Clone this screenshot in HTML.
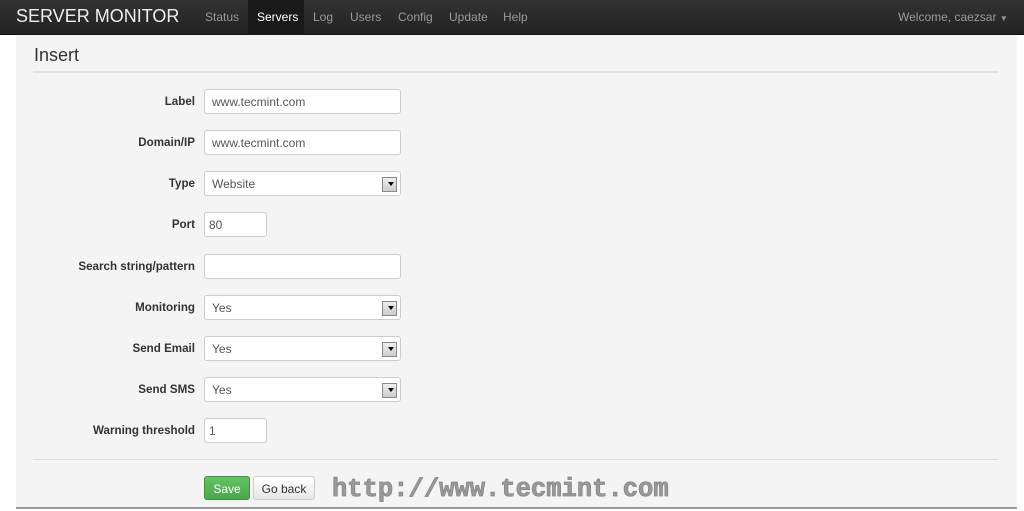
<!DOCTYPE html>
<html><head><style>
*{box-sizing:border-box;margin:0;padding:0}
body{width:1024px;height:511px;overflow:hidden;background:#fff;font-family:"Liberation Sans",Arial,sans-serif;position:relative}
.nav{position:absolute;left:0;top:0;width:1024px;height:35px;background:linear-gradient(#333,#222);border-bottom:1px solid #111}
.brand{position:absolute;left:16px;top:6px;color:#eee;font-size:18px}
.nav a{position:absolute;top:10px;color:#999;font-size:12px}
.act{position:absolute;left:248px;top:0;width:56px;height:35px;background:#1a1a1a}
.panel{position:absolute;left:16px;top:35px;width:1001px;height:474px;background:#f4f4f4;border-bottom:2px solid #999}
h1{position:absolute;left:34px;top:45px;font-size:18px;font-weight:normal;color:#333}
.hr{position:absolute;left:33px;width:965px;height:2px;background:#e2e2e2}
.lbl{position:absolute;right:829px;font-size:11.6px;font-weight:bold;color:#333}
.in{position:absolute;left:204px;width:197px;height:25px;background:#fff;border:1px solid #ccc;border-radius:3px;font-size:12px;color:#555;padding:5px 0 0 7px}
.sm{width:63px;padding-left:4px}
.sel::after{content:"";position:absolute;right:3px;top:5px;width:13px;height:13px;background:linear-gradient(#eee,#ccc);border:1px solid #888}
.sel::before{content:"";position:absolute;right:6px;top:10px;border:3.5px solid transparent;border-top:4px solid #000;z-index:2}
.btn{position:absolute;top:476px;height:24px;border-radius:3px;font-size:12px;padding-top:5px;text-align:center}
.wm{position:absolute;left:332px;top:475px;font-size:25.5px;font-weight:bold;color:#999;font-family:"Liberation Mono","DejaVu Sans Mono",monospace;-webkit-text-stroke:0.8px #888}
</style></head><body>
<div class="nav">
<div class="act"></div>
<div class="brand">SERVER MONITOR</div>
<a style="left:205px">Status</a><a style="left:257px;color:#fff">Servers</a><a style="left:313px">Log</a><a style="left:350px">Users</a><a style="left:398px">Config</a><a style="left:449px">Update</a><a style="left:503px">Help</a>
<a style="left:898px">Welcome, caezsar <span style="font-size:8px">▼</span></a>
</div>
<div class="panel"></div>
<h1>Insert</h1>
<div class="hr" style="top:71px"></div>
<div class="lbl" style="top:95px">Label</div><div class="in" style="top:89px">www.tecmint.com</div>
<div class="lbl" style="top:136px">Domain/IP</div><div class="in" style="top:130px">www.tecmint.com</div>
<div class="lbl" style="top:177px">Type</div><div class="in sel" style="top:171px">Website</div>
<div class="lbl" style="top:218px">Port</div><div class="in sm" style="top:212px">80</div>
<div class="lbl" style="top:260px">Search string/pattern</div><div class="in" style="top:254px"></div>
<div class="lbl" style="top:301px">Monitoring</div><div class="in sel" style="top:295px">Yes</div>
<div class="lbl" style="top:342px">Send Email</div><div class="in sel" style="top:336px">Yes</div>
<div class="lbl" style="top:383px">Send SMS</div><div class="in sel" style="top:377px">Yes</div>
<div class="lbl" style="top:424px">Warning threshold</div><div class="in sm" style="top:418px">1</div>
<div class="hr" style="top:459px;height:1px;background:#ddd"></div>
<div class="btn" style="left:204px;width:46px;background:linear-gradient(#62c462,#4aa64a);border:1px solid #3f943f;color:#fff">Save</div>
<div class="btn" style="left:253px;width:62px;background:linear-gradient(#fff,#e6e6e6);border:1px solid #ccc;color:#333">Go back</div>
<div class="wm">http://www.tecmint.com</div>
</body></html>
